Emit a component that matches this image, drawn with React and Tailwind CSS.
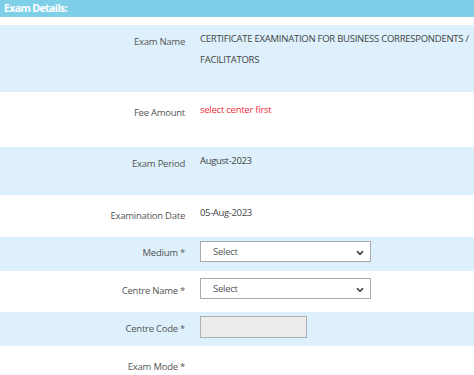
import React from "react";

function Chevron() {
  return (
    <svg width="8" height="6" viewBox="0 0 8 6" className="absolute right-[6px] top-[8px]">
      <path d="M1 1.2 L4 4.2 L7 1.2" fill="none" stroke="#333" strokeWidth="1.6" />
    </svg>
  );
}

function SelectBox({ top }) {
  return (
    <div className={`relative w-[171px] h-[21px] bg-white border border-[#a9a9a9] ${top}`}>
      <span className="absolute left-[12px] top-[2px] leading-[16px] text-[#555]">Select</span>
      <Chevron />
    </div>
  );
}

export default function App() {
  const label = "w-[185px] shrink-0 text-right text-[#555] leading-[16px]";
  return (
    <div className="w-[474px] h-[375px] overflow-hidden bg-white text-[9.5px] tracking-[-0.25px]" style={{ fontFamily: '"Open Sans", sans-serif' }}>
      <div className="h-[17px] bg-[#7fcfe8] text-white font-bold text-[10.5px] tracking-[-0.6px] leading-[17px] pl-[4px]">Exam Details:</div>
      <div className="h-[8px]" />
      <div className="flex h-[67px] bg-[#ddf0fb]">
        <div className={`${label} pt-[9px]`}>Exam Name</div>
        <div className="pl-[15px] pt-[3px] leading-[21px] text-[#444] whitespace-nowrap">
          CERTIFICATE EXAMINATION FOR BUSINESS CORRESPONDENTS /<br />FACILITATORS
        </div>
      </div>
      <div className="flex h-[55px] bg-white">
        <div className={`${label} pt-[13px]`}>Fee Amount</div>
        <div className="pl-[15px] pt-[10px] leading-[16px] text-[#f0323c]">select center first</div>
      </div>
      <div className="flex h-[48px] bg-[#ddf0fb]">
        <div className={`${label} pt-[9px]`}>Exam Period</div>
        <div className="pl-[15px] pt-[6px] leading-[16px] text-[#444] tracking-[-0.35px]">August-2023</div>
      </div>
      <div className="flex h-[42px] bg-white">
        <div className={`${label} pt-[13px]`}>Examination Date</div>
        <div className="pl-[15px] pt-[10px] leading-[16px] text-[#444] tracking-[-0.35px]">05-Aug-2023</div>
      </div>
      <div className="flex h-[34px] bg-[#ddf0fb]">
        <div className={`${label} pt-[8px]`}>Medium *</div>
        <div className="pl-[15px]"><SelectBox top="mt-[4px]" /></div>
      </div>
      <div className="flex h-[41px] bg-white">
        <div className={`${label} pt-[12px]`}>Centre Name *</div>
        <div className="pl-[15px]"><SelectBox top="mt-[7px]" /></div>
      </div>
      <div className="flex h-[34px] bg-[#ddf0fb]">
        <div className={`${label} pt-[9px]`}>Centre Code *</div>
        <div className="pl-[15px]">
          <div className="mt-[4px] w-[107px] h-[22px] bg-[#ececec] border border-[#a8b0b4]" />
        </div>
      </div>
      <div className="flex h-[29px] bg-white">
        <div className={`${label} pt-[13px]`}>Exam Mode *</div>
      </div>
    </div>
  );
}
